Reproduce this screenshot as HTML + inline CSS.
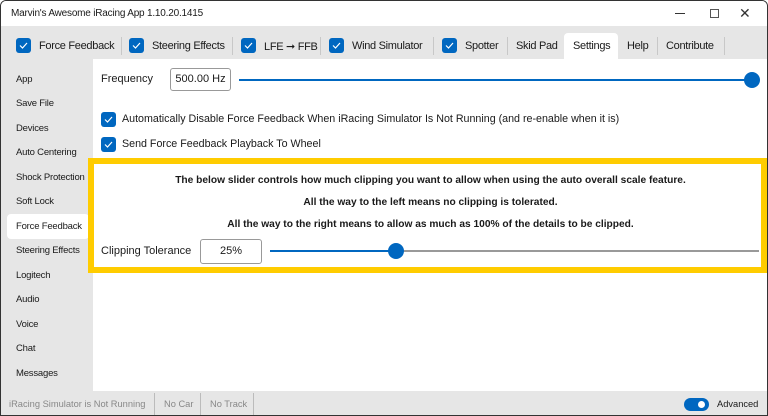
<!DOCTYPE html>
<html><head><style>
*{margin:0;padding:0;box-sizing:border-box}
body{width:768px;height:416px;overflow:hidden;font-family:"Liberation Sans","DejaVu Sans",sans-serif;font-size:11px;color:#1a1a1a;background:#fff;position:relative}
.abs{position:absolute}
.win{position:absolute;left:0;top:0;width:768px;height:416px;border:1px solid #333;border-radius:6px 6px 0 0;overflow:hidden}
.cb{position:absolute;width:15px;height:15px;background:#0067c0;border-radius:3px}
.cb svg{position:absolute;left:2px;top:2px}
.sep{position:absolute;top:36px;width:1px;height:18px;background:#c8c8c8}
.tab{position:absolute;top:39px;font-size:11px;letter-spacing:-0.3px;white-space:nowrap}
.side{position:absolute;left:15px;font-size:9.5px;letter-spacing:-0.2px;color:#1a1a1a;white-space:nowrap}
</style></head><body>
<div class="win">
<div class="abs" style="left:0;top:0;width:768px;height:25px;background:#fff"></div>
<div class="abs" style="left:10px;top:7px;font-size:10px;letter-spacing:-0.2px">Marvin's Awesome iRacing App 1.10.20.1415</div>
<div class="abs" style="left:674px;top:12px;width:10px;height:1px;background:#333"></div>
<div class="abs" style="left:709px;top:8px;width:9px;height:9px;border:1px solid #555"></div>
<div class="abs" style="left:738px;top:4px;font-size:14px;color:#333">✕</div>

<div class="abs" style="left:0;top:25px;width:768px;height:366px;background:#e6e6e6"></div>
<div class="abs" style="left:563px;top:32px;width:54px;height:26px;background:#fff;border-radius:4px 4px 0 0"></div>
<div class="abs" style="left:92px;top:58px;width:676px;height:332px;background:#fff"></div>

<div class="cb" style="left:15px;top:37px"><svg width="11" height="11"><path d="M2 5.5 L4.5 8 L9 3" stroke="#fff" stroke-width="1.2" fill="none"/></svg></div>
<div class="tab" style="left:38px">Force Feedback</div>
<div class="sep" style="left:120px"></div>
<div class="cb" style="left:128px;top:37px"><svg width="11" height="11"><path d="M2 5.5 L4.5 8 L9 3" stroke="#fff" stroke-width="1.2" fill="none"/></svg></div>
<div class="tab" style="left:151px">Steering Effects</div>
<div class="sep" style="left:231px"></div>
<div class="cb" style="left:240px;top:37px"><svg width="11" height="11"><path d="M2 5.5 L4.5 8 L9 3" stroke="#fff" stroke-width="1.2" fill="none"/></svg></div>
<div class="tab" style="left:263px">LFE ➞ FFB</div>
<div class="sep" style="left:319px"></div>
<div class="cb" style="left:328px;top:37px"><svg width="11" height="11"><path d="M2 5.5 L4.5 8 L9 3" stroke="#fff" stroke-width="1.2" fill="none"/></svg></div>
<div class="tab" style="left:351px">Wind Simulator</div>
<div class="sep" style="left:432px"></div>
<div class="cb" style="left:441px;top:37px"><svg width="11" height="11"><path d="M2 5.5 L4.5 8 L9 3" stroke="#fff" stroke-width="1.2" fill="none"/></svg></div>
<div class="tab" style="left:464px">Spotter</div>
<div class="sep" style="left:506px"></div>
<div class="tab" style="left:515px">Skid Pad</div>
<div class="tab" style="left:572px">Settings</div>
<div class="tab" style="left:626px">Help</div>
<div class="sep" style="left:656px"></div>
<div class="tab" style="left:665px">Contribute</div>
<div class="sep" style="left:723px"></div>

<div class="abs" style="left:6px;top:213px;width:82px;height:25px;background:#fff;border-radius:4px"></div>
<div class="side" style="top:73px">App</div>
<div class="side" style="top:97px">Save File</div>
<div class="side" style="top:122px">Devices</div>
<div class="side" style="top:146px">Auto Centering</div>
<div class="side" style="top:171px">Shock Protection</div>
<div class="side" style="top:195px">Soft Lock</div>
<div class="side" style="top:220px">Force Feedback</div>
<div class="side" style="top:244px">Steering Effects</div>
<div class="side" style="top:269px">Logitech</div>
<div class="side" style="top:293px">Audio</div>
<div class="side" style="top:318px">Voice</div>
<div class="side" style="top:342px">Chat</div>
<div class="side" style="top:367px">Messages</div>

<div class="abs" style="left:100px;top:72px;font-size:11px">Frequency</div>
<div class="abs" style="left:169px;top:67px;width:61px;height:23px;border:1px solid #999;border-radius:3px;font-size:11px;text-align:center;line-height:21px">500.00 Hz</div>
<div class="abs" style="left:238px;top:78px;width:512px;height:2px;background:#0067c0"></div>
<div class="abs" style="left:743px;top:71px;width:16px;height:16px;border-radius:50%;background:#0067c0"></div>

<div class="cb" style="left:100px;top:111px"><svg width="11" height="11"><path d="M2 5.5 L4.5 8 L9 3" stroke="#fff" stroke-width="1.2" fill="none"/></svg></div>
<div class="abs" style="left:121px;top:112px;font-size:10.7px;white-space:nowrap">Automatically Disable Force Feedback When iRacing Simulator Is Not Running (and re-enable when it is)</div>
<div class="cb" style="left:100px;top:136px"><svg width="11" height="11"><path d="M2 5.5 L4.5 8 L9 3" stroke="#fff" stroke-width="1.2" fill="none"/></svg></div>
<div class="abs" style="left:121px;top:137px;font-size:10.7px">Send Force Feedback Playback To Wheel</div>

<div class="abs" style="left:87px;top:157px;width:679px;height:115px;border:6px solid #ffcc00"></div>
<div class="abs" style="left:93px;top:174px;width:673px;text-align:center;font-weight:bold;font-size:10.2px">The below slider controls how much clipping you want to allow when using the auto overall scale feature.</div>
<div class="abs" style="left:93px;top:196px;width:673px;text-align:center;font-weight:bold;font-size:10.2px">All the way to the left means no clipping is tolerated.</div>
<div class="abs" style="left:93px;top:218px;width:673px;text-align:center;font-weight:bold;font-size:10.2px">All the way to the right means to allow as much as 100% of the details to be clipped.</div>
<div class="abs" style="left:100px;top:244px;font-size:11px">Clipping Tolerance</div>
<div class="abs" style="left:199px;top:238px;width:62px;height:25px;border:1px solid #999;border-radius:3px;font-size:11px;text-align:center;line-height:23px">25%</div>
<div class="abs" style="left:269px;top:249px;width:126px;height:2px;background:#0067c0"></div>
<div class="abs" style="left:395px;top:249px;width:363px;height:2px;background:#999"></div>
<div class="abs" style="left:387px;top:242px;width:16px;height:16px;border-radius:50%;background:#0067c0"></div>

<div class="abs" style="left:0;top:391px;width:768px;height:25px;background:#e6e6e6"></div>
<div class="abs" style="left:8px;top:398px;font-size:9.3px;color:#888;white-space:nowrap">iRacing Simulator is Not Running</div>
<div class="abs" style="left:153px;top:392px;width:1px;height:24px;background:#bbb"></div>
<div class="abs" style="left:163px;top:398px;font-size:9.3px;color:#888">No Car</div>
<div class="abs" style="left:199px;top:392px;width:1px;height:24px;background:#bbb"></div>
<div class="abs" style="left:209px;top:398px;font-size:9.3px;color:#888">No Track</div>
<div class="abs" style="left:252px;top:392px;width:1px;height:24px;background:#bbb"></div>
<div class="abs" style="left:683px;top:397px;width:25px;height:13px;border-radius:7px;background:#0067c0"></div>
<div class="abs" style="left:697px;top:400px;width:7px;height:7px;border-radius:50%;background:#fff"></div>
<div class="abs" style="left:716px;top:398px;font-size:9.3px">Advanced</div>
</div>
</body></html>
